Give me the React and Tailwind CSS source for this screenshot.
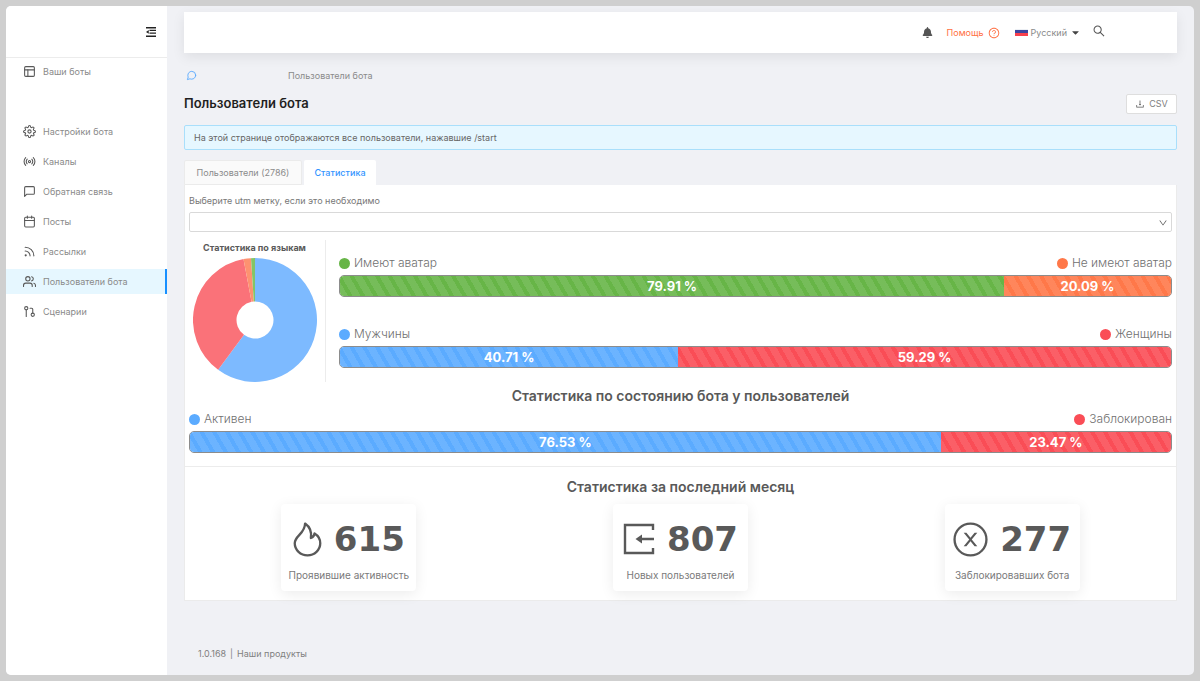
import React from "react";
import {
  AiOutlineDownload,
  AiOutlineQuestionCircle,
  AiOutlineSearch,
  AiOutlineDown,
} from "react-icons/ai";
import {
  FiLayout,
  FiSettings,
  FiRadio,
  FiMessageSquare,
  FiCalendar,
  FiRss,
  FiUsers,
  FiGitPullRequest,
  FiMessageCircle,
} from "react-icons/fi";
import { FaBell, FaCaretDown } from "react-icons/fa";

function FoldIcon({ className }) {
  return (
    <svg viewBox="0 0 20 20" fill="currentColor" className={className}>
      <path d="M0 0h20v3H0zM7 5.5h13v2.5H7zM7 11h13v2.5H7zM0 17h20v3H0zM5.5 6v7.5L0 9.75z" />
    </svg>
  );
}

function FlameIcon({ className }) {
  return (
    <svg viewBox="0 0 30 38" fill="none" stroke="currentColor" strokeWidth="2.4" strokeLinejoin="round" className={className}>
      <path d="M12.5 2.5C17.5 6 19.5 11 18.5 17.500C20.8 16.500 22 15 22.3 12.8C26 15 28.2 19 28.2 23C28.2 30 22.2 35.5 15 35.5C7.8 35.5 1.8 30 1.8 23C1.8 15 12.5 13 12.5 2.5Z" />
    </svg>
  );
}

function EnterIcon({ className }) {
  return (
    <svg viewBox="0 0 32 32" fill="none" stroke="currentColor" strokeWidth="2.4" className={className}>
      <path d="M30 7V2H2v28h28v-5M31 16H17" />
      <path d="M12.5 16l6.500-4.500v9z" fill="currentColor" stroke="none" />
    </svg>
  );
}

function CrossCircleIcon({ className }) {
  return (
    <svg viewBox="0 0 36 36" className={className}>
      <circle cx="18" cy="18" r="16.4" fill="none" stroke="currentColor" strokeWidth="2.4" />
      <path fill="currentColor" d="M11 11h2.800L18 16.100 22.200 11H25l-5.700 7 5.700 7h-2.800L18 19.900 13.800 25H11l5.700-7z" />
    </svg>
  );
}

function Flag() {
  return (
    <svg viewBox="0 0 13 7" className="h-[7px] w-[13px]" aria-hidden="true">
      <rect width="13" height="1" fill="#eceff4" />
      <rect y="1" width="13" height="3" fill="#3b459f" />
      <rect y="4" width="13" height="3" fill="#f8404d" />
    </svg>
  );
}

const menu = [
  { label: "Настройки бота", icon: FiSettings },
  { label: "Каналы", icon: FiRadio },
  { label: "Обратная связь", icon: FiMessageSquare },
  { label: "Посты", icon: FiCalendar },
  { label: "Рассылки", icon: FiRss },
  { label: "Пользователи бота", icon: FiUsers, active: true },
  { label: "Сценарии", icon: FiGitPullRequest },
];

function MenuItem({ label, icon: Icon, active }) {
  return (
    <a
      href="#"
      aria-current={active ? "page" : undefined}
      className={
        active
          ? "flex h-[25px] items-center gap-[7px] border-r-2 border-[#1890ff] bg-[#e6f7ff] pl-[17px] text-[9px] text-[#8a8a8a]"
          : "flex h-[25px] items-center gap-[7px] pl-[17px] text-[9px] text-[#8a8a8a]"
      }
    >
      <Icon className="h-[13px] w-[13px] shrink-0 text-[#595959]" />
      {label}
    </a>
  );
}

const slices = [
  { from: 0, to: 216.5, color: "#7dbaff" },
  { from: 216.5, to: 349.3, color: "#fa7279" },
  { from: 349.3, to: 356.3, color: "#fd9270" },
  { from: 356.3, to: 360, color: "#83c566" },
];

function point(angle, r) {
  const a = (angle * Math.PI) / 180;
  return `${62 + r * Math.sin(a)} ${62 - r * Math.cos(a)}`;
}

function Pie() {
  return (
    <svg viewBox="0 0 124 124" className="h-[124px] w-[124px]" role="img" aria-label="Статистика по языкам">
      {slices.map(({ from, to, color }) => {
        const large = to - from > 180 ? 1 : 0;
        return (
          <path
            key={color}
            fill={color}
            d={`M${point(from, 62)}A62 62 0 ${large} 1 ${point(to, 62)}L${point(to, 18.5)}A18.5 18.5 0 ${large} 0 ${point(from, 18.5)}Z`}
          />
        );
      })}
    </svg>
  );
}

const fills = {
  green: "bg-[#67b547]",
  orange: "bg-[#ff7849]",
  blue: "bg-[#5babff]",
  red: "bg-[#fa4d56]",
};

function Segment({ value, color }) {
  return (
    <div className={fills[color]} style={{ width: `${value}%` }}>
      <div className="flex h-full items-center justify-center bg-[repeating-linear-gradient(60deg,rgba(255,255,255,0.1)_0px,rgba(255,255,255,0.1)_7px,transparent_7px,transparent_11px)] text-[13px] leading-5 font-bold text-white">
        {value.toFixed(2)} %
      </div>
    </div>
  );
}

function Ratio({ left, right }) {
  return (
    <div>
      <div className="flex h-[18px] items-center justify-between text-[12px] font-light text-[#707070]">
        {[left, right].map((side) => (
          <span key={side.label} className="flex items-center gap-1">
            <span className={`h-[11px] w-[11px] rounded-full ${fills[side.color]}`} />
            {side.label}
          </span>
        ))}
      </div>
      <div className="mt-[3px] flex h-[22px] overflow-hidden rounded-[5px] border border-[#8c8c8c]">
        <Segment {...left} />
        <Segment {...right} />
      </div>
    </div>
  );
}

function StatCard({ icon, value, label }) {
  return (
    <div className="flex h-[87px] w-[135px] flex-col items-center rounded-[4px] bg-white pt-[14px] shadow-[0_3px_14px_rgba(0,0,0,0.08)]">
      <div className="flex h-[42px] items-center gap-3 text-[#595959]">
        {icon}
        <span className="font-['DejaVu_Sans',sans-serif] text-[34px] leading-none font-bold">{value}</span>
      </div>
      <span className="mt-[9px] text-[10px] leading-[13px] text-[#7a7a7a]">{label}</span>
    </div>
  );
}

export default function App() {
  return (
    <div className="flex min-h-screen bg-[#cfcfcf] p-[6px] font-['Inter','Noto_Sans',sans-serif]">
      <div className="flex flex-1 overflow-hidden rounded-[5px] bg-[#f0f1f5]">
        <aside className="w-[161px] shrink-0 bg-white">
          <div className="flex h-[52px] items-center justify-end border-b border-[#ececec] pr-[11px]">
            <button type="button" aria-label="Свернуть меню" className="text-[#222]">
              <FoldIcon className="h-[10px] w-[10px]" />
            </button>
          </div>
          <nav className="pt-px">
            <MenuItem label="Ваши боты" icon={FiLayout} />
            <div className="mt-[35px] flex flex-col gap-[5px]">
              {menu.map((item) => (
                <MenuItem key={item.label} {...item} />
              ))}
            </div>
          </nav>
        </aside>

        <div className="min-w-0 flex-1 px-[17px] pt-[6px]">
          <header className="flex h-[41px] items-center justify-end bg-white pr-[71px] text-[9px] shadow-[0_4px_12px_rgba(0,0,0,0.08)]">
            <button type="button" aria-label="Уведомления" className="text-[#555]">
              <FaBell className="h-[11px] w-[11px]" />
            </button>
            <a href="#" className="ml-[14px] flex items-center gap-1 text-[#ff7043]">
              Помощь
              <AiOutlineQuestionCircle className="h-3 w-3" />
            </a>
            <button type="button" className="ml-[15px] flex items-center gap-[3px] text-[#8a8a8a]">
              <Flag />
              Русский
              <FaCaretDown className="h-[11px] w-[11px] text-[#444]" />
            </button>
            <button type="button" aria-label="Поиск" className="ml-[11px] pb-[3px] text-[#555]">
              <AiOutlineSearch className="h-[14px] w-[14px]" />
            </button>
          </header>

          <main>
            <div className="flex h-[45px] items-center gap-[91px] pl-[2px] text-[9px] text-[#8a8a8a]">
              <a href="#" aria-label="Бот" className="text-[#5babff]">
                <FiMessageCircle className="h-[11px] w-[11px]" />
              </a>
              <span>Пользователи бота</span>
            </div>
            <div className="-mt-[5px] flex h-[22px] items-center justify-between">
              <h1 className="text-[13px] font-semibold text-[#1f1f1f]">Пользователи бота</h1>
              <button type="button" className="flex h-5 w-[51px] items-center justify-center gap-1 rounded-[2px] border border-[#dedede] bg-white text-[9px] text-[#808080]">
                <AiOutlineDownload className="h-[10px] w-[10px] text-[#555]" />
                CSV
              </button>
            </div>
            <p className="mt-[10px] flex h-[25px] items-center rounded-[2px] border border-[#a9dffb] bg-[#e6f7ff] pl-[9px] text-[9px] text-[#666]">
              На этой странице отображаются все пользователи, нажавшие /start
            </p>

            <div role="tablist" className="mt-[10px] flex gap-[2px] text-[9px]">
              <button type="button" role="tab" aria-selected="false" className="h-[25px] w-[118px] rounded-t-[2px] border border-[#ebebeb] bg-[#fafafa] text-[#8a8a8a]">
                Пользователи (2786)
              </button>
              <button type="button" role="tab" aria-selected="true" className="h-[25px] w-[72px] rounded-t-[2px] bg-white font-medium text-[#3395ff]">
                Статистика
              </button>
            </div>

            <section className="border border-t-0 border-[#ebebeb] bg-white">
              <div className="px-1 pt-[9px]">
                <label htmlFor="utm" className="block text-[9px] leading-[14px] text-[#777]">
                  Выберите utm метку, если это необходимо
                </label>
                <div className="relative mt-1">
                  <select id="utm" defaultValue="" className="block h-5 w-full appearance-none rounded-[2px] border border-[#d9d9d9] bg-white">
                    <option value=""></option>
                  </select>
                  <AiOutlineDown className="pointer-events-none absolute top-[6px] right-1 h-[10px] w-[10px] text-[#555]" />
                </div>

                <div className="mt-2 flex">
                  <div className="flex h-[142px] w-[137px] shrink-0 flex-col items-center border-r border-[#ececec] pr-[5px]">
                    <h2 className="mt-px mb-1 text-[9px] leading-[13px] font-bold text-[#595959]">Статистика по языкам</h2>
                    <Pie />
                  </div>
                  <div className="ml-[13px] flex flex-1 flex-col gap-7 pt-[14px]">
                    <Ratio left={{ label: "Имеют аватар", value: 79.91, color: "green" }} right={{ label: "Не имеют аватар", value: 20.09, color: "orange" }} />
                    <Ratio left={{ label: "Мужчины", value: 40.71, color: "blue" }} right={{ label: "Женщины", value: 59.29, color: "red" }} />
                  </div>
                </div>

                <h2 className="my-[5px] text-center text-[14px] leading-[18px] font-semibold text-[#595959]">
                  Статистика по состоянию бота у пользователей
                </h2>
                <Ratio left={{ label: "Активен", value: 76.53, color: "blue" }} right={{ label: "Заблокирован", value: 23.47, color: "red" }} />
              </div>

              <div className="mt-[13px] border-t border-[#ececec] pt-[11px] pb-[9px]">
                <h2 className="text-center text-[14px] leading-[18px] font-semibold text-[#595959]">Статистика за последний месяц</h2>
                <div className="-mx-0.5 mt-2 grid grid-cols-3 justify-items-center">
                  <StatCard icon={<FlameIcon className="h-[37px] w-[29px]" />} value="615" label="Проявившие активность" />
                  <StatCard icon={<EnterIcon className="h-8 w-8" />} value="807" label="Новых пользователей" />
                  <StatCard icon={<CrossCircleIcon className="h-[35px] w-[35px]" />} value="277" label="Заблокировавших бота" />
                </div>
              </div>
            </section>
          </main>

          <footer className="mt-[45px] flex gap-1 pl-[14px] text-[9px] leading-4 text-[#808080]">
            <span>1.0.168</span>
            <span>|</span>
            <a href="#">Наши продукты</a>
          </footer>
        </div>
      </div>
    </div>
  );
}
